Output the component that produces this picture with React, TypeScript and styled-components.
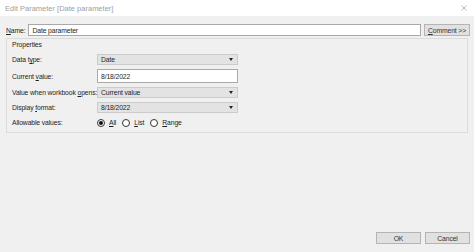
import React from "react";
import styled, { createGlobalStyle } from "styled-components";

const Global = createGlobalStyle`
  html, body { margin: 0; padding: 0; background: #f0f0f0; }
  body { font-family: "Liberation Sans", Arial, sans-serif; }
  #root { width: 474px; height: 252px; }
  * { box-sizing: border-box; }
`;

const Window = styled.div`
  width: 474px;
  height: 252px;
  display: flex;
  flex-direction: column;
  background: #f0f0f0;
  font-size: 6.8px;
  letter-spacing: -0.12px;
  color: #1e1e1e;
  overflow: hidden;
`;

const TitleBar = styled.div`
  height: 16px;
  flex: none;
  background: #ffffff;
  display: flex;
  align-items: center;
  justify-content: space-between;
  padding: 0 5px 0 5px;
`;

const Title = styled.span`
  color: #a0a0a0;
  font-size: 7.5px;
  letter-spacing: 0;
`;

const CloseIcon = styled.svg`
  width: 6px;
  height: 6px;
  margin-right: 2px;
`;

const Body = styled.div`
  flex: 1;
  display: flex;
  flex-direction: column;
  padding: 8px 4px 8px 6px;
`;

const NameRow = styled.div`
  display: flex;
  align-items: center;
  height: 12px;
  gap: 3px;
`;

const Label = styled.span`
  white-space: nowrap;
`;

const TextBox = styled.div<{ $grow?: boolean }>`
  height: ${(p) => (p.$grow ? "12px" : "14px")};
  flex: ${(p) => (p.$grow ? 1 : "none")};
  background: #ffffff;
  border: 1px solid #a9a9a9;
  display: flex;
  align-items: center;
  padding: 0 3px;
`;

const Button = styled.div<{ $w: number }>`
  width: ${(p) => p.$w}px;
  height: 12px;
  background: #e1e1e1;
  border: 1px solid #b4b4b4;
  display: flex;
  align-items: center;
  justify-content: center;
  color: #333;
`;

const Group = styled.div`
  margin-top: 2px;
  margin-right: 2px;
  border: 1px solid #dcdcdc;
  display: flex;
  flex-direction: column;
  padding: 0 0 4px 5px;
`;

const GroupTitle = styled.div`
  height: 10px;
  display: flex;
  align-items: center;
`;

const Grid = styled.div`
  display: grid;
  grid-template-columns: 85px 141px;
  row-gap: 4px;
  margin-top: 5px;
  align-items: center;
`;

const Select = styled.div`
  height: 11px;
  background: #e3e3e3;
  border: 1px solid #cbcbcb;
  display: flex;
  align-items: center;
  justify-content: space-between;
  padding: 0 4px 0 3px;
`;

const Arrow = styled.span`
  width: 0;
  height: 0;
  border-left: 2.5px solid transparent;
  border-right: 2.5px solid transparent;
  border-top: 3px solid #222;
`;

const RadioRow = styled.div`
  display: flex;
  align-items: center;
  height: 11px;
`;

const RadioItem = styled.label`
  display: flex;
  align-items: center;
  gap: 4px;
  margin-right: 6px;
`;

const Circle = styled.span<{ $on?: boolean }>`
  width: 8px;
  height: 8px;
  border-radius: 50%;
  border: 1px solid #333;
  background: #fff;
  display: flex;
  align-items: center;
  justify-content: center;
  &::after {
    content: "";
    width: 4px;
    height: 4px;
    border-radius: 50%;
    background: ${(p) => (p.$on ? "#111" : "transparent")};
  }
`;

const Spacer = styled.div`
  flex: 1;
`;

const Footer = styled.div`
  display: flex;
  justify-content: flex-end;
  gap: 4px;
`;

const rows: { label: React.ReactNode; value: string; kind: "select" | "input" }[] = [
  { label: <>Data t<u>y</u>pe:</>, value: "Date", kind: "select" },
  { label: <>Current <u>v</u>alue:</>, value: "8/18/2022", kind: "input" },
  { label: <>Value when workbook <u>o</u>pens:</>, value: "Current value", kind: "select" },
  { label: <>Display <u>f</u>ormat:</>, value: "8/18/2022", kind: "select" },
];

export default function App() {
  return (
    <>
      <Global />
      <Window>
        <TitleBar>
          <Title>Edit Parameter [Date parameter]</Title>
          <CloseIcon viewBox="0 0 6 6">
            <path d="M0.5 0.5 L5.5 5.5 M5.5 0.5 L0.5 5.5" stroke="#9a9a9a" strokeWidth="0.7" />
          </CloseIcon>
        </TitleBar>
        <Body>
          <NameRow>
            <Label>
              <u>N</u>ame:
            </Label>
            <TextBox $grow>Date parameter</TextBox>
            <Button $w={46}>
              <span>
                <u>C</u>omment &gt;&gt;
              </span>
            </Button>
          </NameRow>
          <Group>
            <GroupTitle>Properties</GroupTitle>
            <Grid>
              {rows.map((r, i) => (
                <React.Fragment key={i}>
                  <Label>{r.label}</Label>
                  {r.kind === "select" ? (
                    <Select>
                      <span>{r.value}</span>
                      <Arrow />
                    </Select>
                  ) : (
                    <TextBox>{r.value}</TextBox>
                  )}
                </React.Fragment>
              ))}
              <Label>Allowable values:</Label>
              <RadioRow>
                <RadioItem>
                  <Circle $on />
                  <span>
                    <u>A</u>ll
                  </span>
                </RadioItem>
                <RadioItem>
                  <Circle />
                  <span>
                    <u>L</u>ist
                  </span>
                </RadioItem>
                <RadioItem>
                  <Circle />
                  <span>
                    <u>R</u>ange
                  </span>
                </RadioItem>
              </RadioRow>
            </Grid>
          </Group>
          <Spacer />
          <Footer>
            <Button $w={45}>OK</Button>
            <Button $w={45}>Cancel</Button>
          </Footer>
        </Body>
      </Window>
    </>
  );
}
